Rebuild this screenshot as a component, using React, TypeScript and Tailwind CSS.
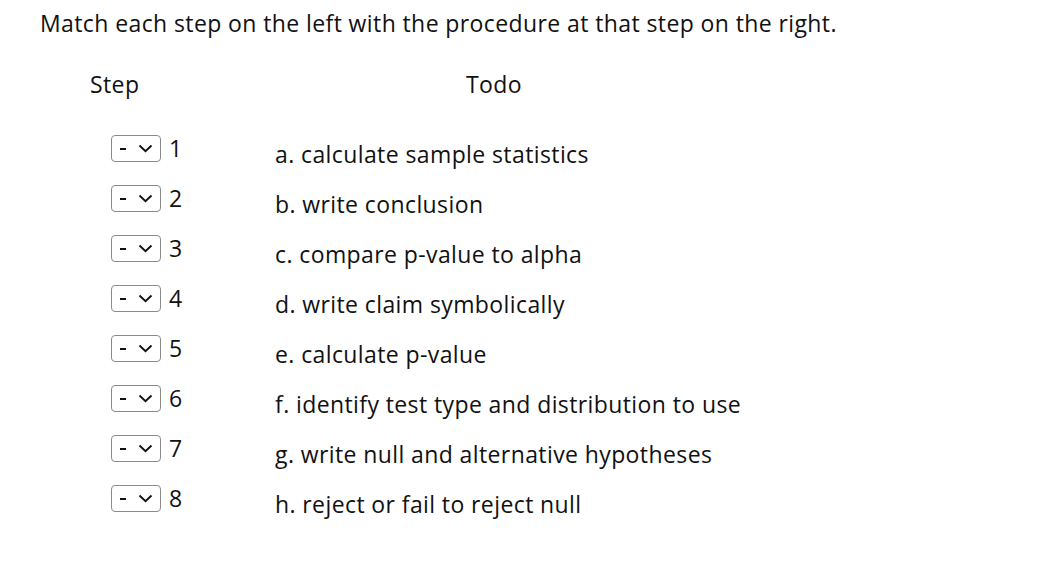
import React from "react";

const todos = [
  "a. calculate sample statistics",
  "b. write conclusion",
  "c. compare p-value to alpha",
  "d. write claim symbolically",
  "e. calculate p-value",
  "f. identify test type and distribution to use",
  "g. write null and alternative hypotheses",
  "h. reject or fail to reject null",
];

function StepSelect() {
  return (
    <div className="flex h-[27px] w-[50px] items-center rounded-[4px] border border-[#8a8a8a] bg-white pl-[8px] pr-[7px]">
      <span className="h-[2px] w-[6px] bg-[#111]" />
      <svg className="ml-auto" width="15" height="9" viewBox="0 0 15 9" fill="none">
        <path d="M1.5 1.5 L7.5 7.2 L13.5 1.5" stroke="#111" strokeWidth="1.9" />
      </svg>
    </div>
  );
}

export default function App() {
  return (
    <div className="min-h-screen bg-white pl-[40px] pt-[10px] text-[#111] [font-family:'Open_Sans',sans-serif]">
      <p className="text-[23px] leading-[27px] tracking-[0.4px]">
        Match each step on the left with the procedure at that step on the right.
      </p>

      <div className="mt-[34px] flex text-[23px] leading-[27px] tracking-[0.4px]">
        <div className="w-[235px]">
          <p className="pl-[50px]">Step</p>
          <div className="mt-[37px] flex flex-col gap-[23px] pl-[71px]">
            {todos.map((_, index) => (
              <div key={`step-${index}`} className="flex items-center gap-[8px]">
                <StepSelect />
                <span>{index + 1}</span>
              </div>
            ))}
          </div>
        </div>

        <div>
          <p className="pl-[191px]">Todo</p>
          <div className="mt-[43px] flex flex-col gap-[23px]">
            {todos.map((todo) => (
              <p key={todo}>{todo}</p>
            ))}
          </div>
        </div>
      </div>
    </div>
  );
}
